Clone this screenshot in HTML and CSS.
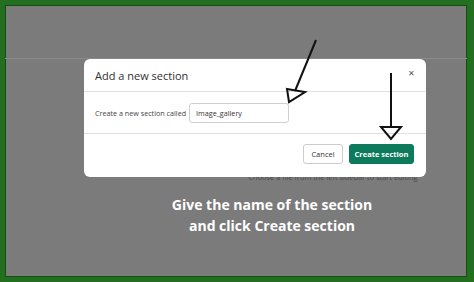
FILE: index.html
```html
<!DOCTYPE html>
<html lang="en">
<head>
  <meta charset="UTF-8" />
  <title>Add a new section</title>
  <link rel="stylesheet" href="styles.css">
</head>
<body>
  <div class="frame">
    <div class="topbar"></div>

    <div class="main">
      <p class="hint">Choose a file from the left sidebar to start editing</p>
      <p class="caption">Give the name of the section<br>and click Create section</p>
    </div>

    <!-- modal sits over the editor -->
    <div class="modal">
      <div class="modal-head">
        <span class="modal-title">Add a new section</span>
        <span class="close">&#x2715;</span>
      </div>
      <div class="modal-body">
        <label for="name">Create a new section called</label>
        <input id="name" type="text" value="Image_gallery">
      </div>
      <div class="modal-foot">
        <button class="btn">Cancel</button>
        <button class="btn btn-primary">Create section</button>
      </div>
    </div>
  </div>

  <!-- hand drawn arrows -->
  <svg class="arrows" width="474" height="282" viewBox="0 0 474 282">
    <g fill="none" stroke="#111" stroke-width="2" stroke-linejoin="miter">
      <line x1="316" y1="40" x2="295" y2="91" />
      <polygon points="287,89 305,92 289,102" />
      <line x1="391" y1="73" x2="391" y2="127" />
      <polygon points="381,127 401,127 391,139" />
    </g>
  </svg>
</body>
</html>
```

FILE: styles.css
```css
body {
  margin: 0;
  padding: 0;
  width: 474px;
  height: 282px;
  position: relative;
  overflow: hidden;
  font-family: "Open Sans", sans-serif;
  background-color: #1f6a1f;
}

.frame {
  position: relative;
  box-sizing: border-box;
  width: 474px;
  height: 282px;
  border: 5px solid #22701f;
  border-right-width: 7px;
  background-color: #7b7b7b;
  box-shadow: inset 0 0 0 1px #154d15;
}

.topbar {
  height: 53px;
  border-bottom: 1px solid #898989;
}

.main {
  display: flex;
  flex-direction: column;
  align-items: center;
  padding-left: 72px;
}

.hint {
  margin: 113px 0 0 122px;
  font-size: 7.4px;
  color: #4a4a4a;
}

.caption {
  margin: 12px 0 0 0;
  font-size: 14px;
  font-weight: 700;
  line-height: 21px;
  color: #fff;
  text-align: center;
}

.modal {
  position: absolute;
  left: 79px;
  top: 54px;
  width: 342px;
  height: 118px;
  background-color: #fff;
  border-radius: 6px;
  display: flex;
  flex-direction: column;
}

.modal-head {
  height: 33px;
  box-sizing: border-box;
  border-bottom: 1px solid #e1e1e1;
  display: flex;
  align-items: center;
  justify-content: space-between;
  padding: 0 11px 0 11px;
}

.modal-title {
  font-size: 11px;
  color: #303030;
}

.close {
  font-size: 7.5px;
  color: #555;
  margin-top: -4px;
}

.modal-body {
  height: 42px;
  box-sizing: border-box;
  border-bottom: 1px solid #e1e1e1;
  display: flex;
  align-items: center;
  gap: 3px;
  padding: 0 11px;
}

.modal-body label {
  font-size: 7.2px;
  color: #444;
}

.modal-body input {
  font-family: "Open Sans", sans-serif;
  font-size: 7.2px;
  color: #333;
  width: 100px;
  height: 20px;
  box-sizing: border-box;
  border: 1px solid #cfcfcf;
  border-radius: 3px;
  padding-left: 6px;
  margin-top: 1px;
}

.modal-foot {
  flex: 1;
  display: flex;
  justify-content: flex-end;
  align-items: center;
  gap: 6px;
  padding: 0 12px 3px 0;
}

.btn {
  font-family: "Open Sans", sans-serif;
  font-size: 7.5px;
  height: 20px;
  border-radius: 3px;
  background-color: #fff;
  border: 1px solid #cccccc;
  color: #333;
  width: 40px;
  padding: 0;
  cursor: pointer;
}

.btn-primary {
  width: 65px;
  background-color: #0c7a5b;
  border-color: #0c7a5b;
  color: #fff;
  font-weight: 700;
}

.arrows {
  position: absolute;
  left: 0;
  top: 0;
}
```
